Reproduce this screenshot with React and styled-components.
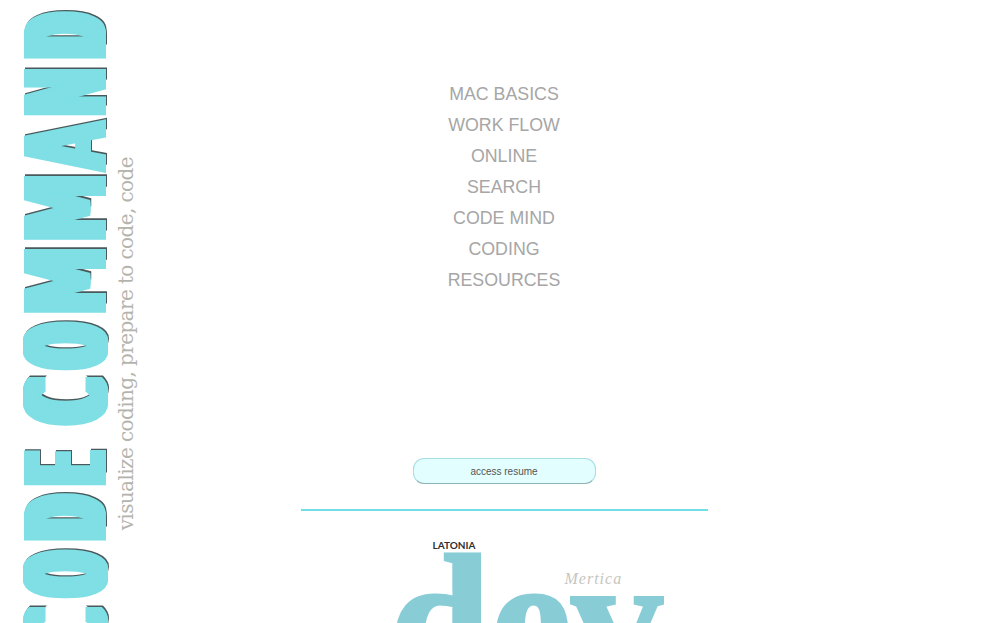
import React from "react";
import styled, { createGlobalStyle } from "styled-components";

const GlobalStyle = createGlobalStyle`
    html, body {
        margin: 0;
        height: 100%;
        overflow: hidden;
        background: #ffffff;
    }
`;

const Page = styled.div`
    height: 623px;
    overflow: hidden;
    display: grid;
    grid-template-columns: 1fr 407px 1fr;
    font-family: "Liberation Sans", Arial, sans-serif;
`;

const Side = styled.aside`
    display: flex;
    align-items: flex-start;
    padding-left: 25px;
    height: 623px;
`;

const Title = styled.h1`
    margin: 11px 0 0;
    width: 84px;
    flex-shrink: 0;
    display: flex;
    flex-direction: column-reverse;
    font-family: "DejaVu Sans", sans-serif;
    font-size: 112px;
    font-weight: 700;
    color: #7fdfe5;
`;

const Letter = styled.span`
    display: flex;
    align-items: center;
    justify-content: center;
    height: ${(props) => props.$size}px;
    margin-top: ${(props) => props.$gap}px;
`;

// les lettres du logo sont tres grasses et etroites : on epaissit les
// futs avec des ombres puis on ecrase le tout dans le sens de la lecture
const epaisseur = (n) => {
    const ombres = [];
    for (let x = 2; x <= n; x += 2) {
        ombres.push(`${-x}px 0 0 #7fdfe5`, `${x}px 0 0 #7fdfe5`);
    }
    ombres.push(`${n + 3}px 1px 0 #4a5a5c`);
    return ombres.join(", ");
};

const Glyph = styled.span`
    display: block;
    flex-shrink: 0;
    white-space: pre;
    line-height: 84px;
    transform: scaleY(${(props) => props.$squeeze}) rotate(-90deg);
    text-shadow: ${(props) => epaisseur(props.$spread)};
`;

const Tagline = styled.p`
    margin: 157px 0 0 6px;
    writing-mode: vertical-rl;
    transform: rotate(180deg);
    white-space: nowrap;
    font-family: "DejaVu Serif", "Liberation Serif", serif;
    font-size: 20px;
    line-height: 22px;
    letter-spacing: -0.6px;
    color: #b4b4ad;
`;

const Main = styled.main`
    display: flex;
    flex-direction: column;
    align-items: center;
    padding-top: 79px;
`;

const Nav = styled.nav`
    display: flex;
    flex-direction: column;
    align-items: center;
`;

const NavLink = styled.a`
    font-size: 17.8px;
    line-height: 31px;
    color: #a6a6a6;
`;

const ResumeButton = styled.button`
    margin-top: 162px;
    width: 183px;
    height: 26px;
    padding: 0;
    border: 1px solid #a5dfe3;
    border-bottom-color: #8fb4b8;
    border-radius: 11px;
    background: #e2feff;
    color: #555555;
    font-family: "Liberation Sans", Arial, sans-serif;
    font-size: 10px;
`;

const Rule = styled.hr`
    align-self: stretch;
    margin: 25px 0 0;
    border: 0;
    height: 2px;
    background: #72dfe6;
`;

const Logo = styled.div`
    position: relative;
    align-self: flex-start;
    width: 276px;
    margin: 28px 0 0 89px;
`;

const LogoBrand = styled.div`
    margin-left: 43px;
    font-family: "Lato", sans-serif;
    font-size: 10px;
    line-height: 12px;
    font-weight: 700;
    color: #2f2f2f;
`;

const LogoWord = styled.div`
    margin-top: -21px;
    font-family: "Liberation Serif", serif;
    font-weight: 700;
    font-size: 182px;
    line-height: 180px;
    color: #88ccd6;
    -webkit-text-stroke: 3px #88ccd6;
    white-space: nowrap;
`;

const LogoScript = styled.span`
    position: absolute;
    left: 175px;
    top: 31px;
    font-family: "Liberation Serif", serif;
    font-style: italic;
    font-size: 16px;
    line-height: 18px;
    letter-spacing: 1px;
    color: #c6c6c0;
`;

const links = [
    "MAC BASICS",
    "WORK FLOW",
    "ONLINE",
    "SEARCH",
    "CODE MIND",
    "CODING",
    "RESOURCES"
];

// hauteur de chaque lettre sur la page, ecart au-dessus, ecrasement, epaississement
const letters = [
    { ch: "C", size: 50, gap: 7, squeeze: 0.5, spread: 14 },
    { ch: "O", size: 50, gap: 6, squeeze: 0.435, spread: 14 },
    { ch: "D", size: 50, gap: 7, squeeze: 0.45, spread: 14 },
    { ch: "E", size: 37, gap: 0, squeeze: 0.41, spread: 14 },
    { ch: " ", size: 23, gap: 0, squeeze: 1, spread: 0 },
    { ch: "C", size: 50, gap: 5, squeeze: 0.5, spread: 14 },
    { ch: "O", size: 50, gap: 7, squeeze: 0.435, spread: 14 },
    { ch: "M", size: 66, gap: 7, squeeze: 0.62, spread: 6 },
    { ch: "M", size: 66, gap: 2, squeeze: 0.62, spread: 6 },
    { ch: "A", size: 54, gap: 3, squeeze: 0.55, spread: 6 },
    { ch: "N", size: 48, gap: 7, squeeze: 0.52, spread: 8 },
    { ch: "D", size: 50, gap: 0, squeeze: 0.45, spread: 14 }
];

const App = () => {
    return (
        <Page>
            <GlobalStyle />
            <Side>
                <Title>
                    {letters.map((l, i) => (
                        <Letter key={i} $size={l.size} $gap={l.gap}>
                            <Glyph $squeeze={l.squeeze} $spread={l.spread}>
                                {l.ch}
                            </Glyph>
                        </Letter>
                    ))}
                </Title>
                <Tagline>visualize coding, prepare to code, code</Tagline>
            </Side>
            <Main>
                <Nav>
                    {links.map((link) => (
                        <NavLink key={link}>{link}</NavLink>
                    ))}
                </Nav>
                <ResumeButton>access resume</ResumeButton>
                <Rule />
                <Logo>
                    <LogoBrand>LATONIA</LogoBrand>
                    <LogoWord>dev</LogoWord>
                    <LogoScript>Mertica</LogoScript>
                </Logo>
            </Main>
            <div />
        </Page>
    );
};

export default App;
